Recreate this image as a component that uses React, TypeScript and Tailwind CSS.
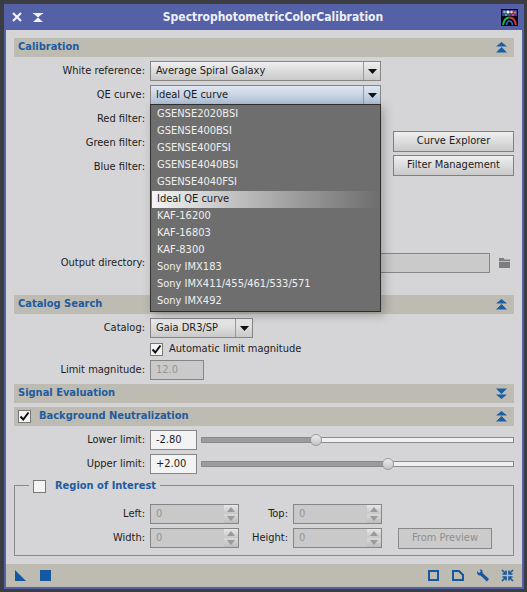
import type { ReactNode } from "react";

const qeCurves = [
  "GSENSE2020BSI",
  "GSENSE400BSI",
  "GSENSE400FSI",
  "GSENSE4040BSI",
  "GSENSE4040FSI",
  "Ideal QE curve",
  "KAF-16200",
  "KAF-16803",
  "KAF-8300",
  "Sony IMX183",
  "Sony IMX411/455/461/533/571",
  "Sony IMX492",
];

function Collapse({ down = false }: { down?: boolean }) {
  return (
    <svg width="11" height="11" viewBox="0 0 11 11" className={down ? "rotate-180" : ""}>
      <path d="M5.5 0 L11 4.5 H0 Z M5.5 5 L11 10.5 H0 Z" fill="#1a5ea3" />
    </svg>
  );
}

function SectionHeader({ title, collapsed = false, check = false }: { title: string; collapsed?: boolean; check?: boolean }) {
  return (
    <div className="flex items-center h-[19px] bg-[#bdbbb2] pl-[4px] pr-[7px] shrink-0">
      {check && (
        <div className="mr-[8px]">
          <CheckBox checked />
        </div>
      )}
      <span className="font-bold text-[#1d5c9f] text-[11px] flex-1">{title}</span>
      <Collapse down={collapsed} />
    </div>
  );
}

function CheckBox({ checked = false }: { checked?: boolean }) {
  return (
    <div className="w-[13px] h-[13px] border border-[#777] bg-[#f4f4f4] flex items-center justify-center shrink-0">
      {checked && (
        <svg width="11" height="11" viewBox="0 0 11 11">
          <path d="M1.5 5.5 L4.3 8.5 L9.5 1.5" fill="none" stroke="#111" strokeWidth="2" />
        </svg>
      )}
    </div>
  );
}

function Label({ children, w = "w-[131px]" }: { children?: ReactNode; w?: string }) {
  return <div className={`${w} text-right text-[#1c1c1c] mr-[5px] shrink-0`}>{children}</div>;
}

function Row({ label, children }: { label?: string; children: ReactNode }) {
  return (
    <div className="flex items-center h-[20px] mt-[4px] shrink-0">
      <Label>{label}</Label>
      {children}
    </div>
  );
}

function Combo({ value, w = "w-[231px]", open = false }: { value: string; w?: string; open?: boolean }) {
  return (
    <div
      className={`${w} h-[20px] border border-[#868686] flex items-center shrink-0 bg-gradient-to-b ${
        open ? "from-[#dfe6f1] to-[#b3c3da]" : "from-[#efefef] to-[#c9c9c9]"
      }`}
    >
      <span className="flex-1 pl-[5px] text-[#1c1c1c] whitespace-nowrap">{value}</span>
      <div className="w-[17px] h-[18px] border-l border-[#999] flex items-center justify-center shrink-0">
        <svg width="9" height="5" viewBox="0 0 9 5">
          <path d="M0 0 H9 L4.5 5 Z" fill="#111" />
        </svg>
      </div>
    </div>
  );
}

function Button({ children, disabled = false, w = "w-[121px]" }: { children: ReactNode; disabled?: boolean; w?: string }) {
  return (
    <div
      className={`${w} h-[21px] border flex items-center justify-center shrink-0 ${
        disabled
          ? "border-[#888] text-[#8f8f8f] bg-[#cbcbcb]"
          : "border-[#808080] text-[#1c1c1c] bg-gradient-to-b from-[#efefef] to-[#c9c9c9]"
      }`}
    >
      {children}
    </div>
  );
}

function Spin({ value }: { value: string }) {
  return (
    <div className="w-[89px] h-[20px] border border-[#868686] bg-[#c9c9c9] flex items-center shrink-0">
      <span className="flex-1 pl-[5px] text-[#959595]">{value}</span>
      <div className="w-[14px] h-[18px] flex flex-col shrink-0">
        <div className="flex-1 bg-gradient-to-b from-[#e6e6e6] to-[#c6c6c6] flex items-center justify-center">
          <svg width="8" height="5" viewBox="0 0 8 5">
            <path d="M4 0 L8 5 H0 Z" fill="#9a9a9a" />
          </svg>
        </div>
        <div className="flex-1 bg-gradient-to-b from-[#d9d9d9] to-[#bdbdbd] flex items-center justify-center">
          <svg width="8" height="5" viewBox="0 0 8 5">
            <path d="M0 0 H8 L4 5 Z" fill="#9a9a9a" />
          </svg>
        </div>
      </div>
    </div>
  );
}

function Slider({ pos }: { pos: number }) {
  return (
    <div className="relative flex-1 h-[6px] ml-[4px] border border-[#8a8a8a] bg-[#efefef]">
      <div className="h-full bg-[#9b9b9b]" style={{ width: pos }} />
      <div
        className="absolute top-[-4px] w-[12px] h-[12px] rounded-full border border-[#9a9a9a] bg-gradient-to-b from-[#ececec] to-[#c4c4c4]"
        style={{ left: pos - 6 }}
      />
    </div>
  );
}

function TextBox({ value, w, disabled = false }: { value?: string; w: string; disabled?: boolean }) {
  return (
    <div
      className={`${w} h-[20px] border border-[#868686] flex items-center pl-[5px] shrink-0 ${
        disabled ? "bg-[#cacaca] text-[#959595]" : "bg-[#f3f3f3] text-[#1c1c1c]"
      }`}
    >
      {value}
    </div>
  );
}

function AppLogo() {
  return (
    <svg width="17" height="17" viewBox="0 0 17 17">
      <rect width="17" height="17" fill="#07070c" />
      <rect x="1" y="1" width="15" height="6" fill="#4a3a90" />
      <circle cx="3.5" cy="3" r="1.3" fill="#40e0a0" />
      <circle cx="7" cy="3" r="1.6" fill="#ffffff" />
      <circle cx="10.5" cy="3" r="1.3" fill="#f8e850" />
      <circle cx="14" cy="3.5" r="1.3" fill="#f06060" />
      <circle cx="5" cy="6" r="1" fill="#40d060" />
      <circle cx="12" cy="6" r="1" fill="#e040c0" />
      <path d="M2 16 C3 10 6 8.5 8.5 8.5" fill="none" stroke="#20b050" strokeWidth="2" />
      <path d="M8.5 8.5 C11 8.5 14 10 15 16" fill="none" stroke="#e03030" strokeWidth="2" />
      <path d="M5.5 16 C6 13 7 12 8.5 12 C10 12 11 13 11.5 16" fill="none" stroke="#2070e0" strokeWidth="1.6" />
    </svg>
  );
}

export default function App() {
  return (
    <div className="w-[527px] h-[592px] bg-[#3b3d42] pt-[4px] pl-[4px] text-[11px] font-['DejaVu_Sans_Condensed','DejaVu_Sans',sans-serif] overflow-hidden">
      <div className="w-[520px] h-[585px] bg-[#5561a6] px-[2px] pb-[2px] flex flex-col">
        {/* Title bar */}
        <div className="h-[26px] flex items-center shrink-0 relative">
          <svg width="10" height="10" viewBox="0 0 10 10" className="ml-[6px]">
            <path d="M1 1 L9 9 M9 1 L1 9" stroke="#f2f2f6" strokeWidth="2.2" />
          </svg>
          <svg width="10" height="9" viewBox="0 0 10 9" className="ml-[11px]">
            <path d="M0 0 H10 V1 H0 Z M1 1 H9 L5 4.5 Z M5 4.5 L10 9 H0 Z" fill="#f2f2f6" />
          </svg>
          <span className="flex-1 text-center font-bold text-[#eef0f8] text-[12px] pl-[2px]">
            SpectrophotometricColorCalibration
          </span>
          <div className="mr-[4px]">
            <AppLogo />
          </div>
        </div>

        {/* Body */}
        <div className="flex-1 bg-[#d5d5d7] flex flex-col relative">
          <div className="px-[8px] pt-[8px] flex flex-col flex-1">
            <SectionHeader title="Calibration" />
            <Row label="White reference:">
              <Combo value="Average Spiral Galaxy" />
            </Row>
            <Row label="QE curve:">
              <Combo value="Ideal QE curve" open />
            </Row>
            <Row label="Red filter:">
              <Combo value="" />
            </Row>
            <Row label="Green filter:">
              <Combo value="" />
              <div className="ml-[12px] -mt-[4px]">
                <Button>Curve Explorer</Button>
              </div>
            </Row>
            <Row label="Blue filter:">
              <Combo value="" />
              <div className="ml-[12px] -mt-[3px]">
                <Button>Filter Management</Button>
              </div>
            </Row>
            <div className="h-[72px] shrink-0" />
            <Row label="Output directory:">
              <TextBox w="w-[340px]" disabled />
              <svg width="11" height="10" viewBox="0 0 11 10" className="ml-[9px]">
                <path d="M0 0 H4.5 L5.5 1.5 H11 V3 H0 Z M0 3.8 H11 V10 H0 Z" fill="#7d7d7d" />
              </svg>
            </Row>

            <div className="mt-[22px]">
              <SectionHeader title="Catalog Search" />
            </div>
            <Row label="Catalog:">
              <Combo value="Gaia DR3/SP" w="w-[103px]" />
            </Row>
            <div className="flex items-center h-[14px] mt-[4px] shrink-0">
              <Label />
              <CheckBox checked />
              <span className="ml-[6px] text-[#1c1c1c]">Automatic limit magnitude</span>
            </div>
            <Row label="Limit magnitude:">
              <TextBox value="12.0" w="w-[54px]" disabled />
            </Row>
            <div className="mt-[4px]">
              <SectionHeader title="Signal Evaluation" collapsed />
            </div>
            <div className="mt-[4px]">
              <SectionHeader title="Background Neutralization" check />
            </div>
            <Row label="Lower limit:">
              <TextBox value="-2.80" w="w-[47px]" />
              <Slider pos={114} />
            </Row>
            <Row label="Upper limit:">
              <TextBox value="+2.00" w="w-[47px]" />
              <Slider pos={186} />
            </Row>

            {/* Region of Interest */}
            <div className="relative mt-[11px] h-[71px] border border-[#8a8a8a] pt-[14px] shrink-0">
              <div className="absolute left-[14px] top-[-7px] flex items-center bg-[#d5d5d7] px-[4px] h-[14px]">
                <CheckBox />
                <span className="ml-[9px] font-bold text-[#1d5c9f] text-[11px]">Region of Interest</span>
              </div>
              <div className="flex items-center h-[20px] mt-[4px] -ml-[1px]">
                <Label>Left:</Label>
                <Spin value="0" />
                <Label w="w-[49px]">Top:</Label>
                <Spin value="0" />
              </div>
              <div className="flex items-center h-[20px] mt-[4px] -ml-[1px]">
                <Label>Width:</Label>
                <Spin value="0" />
                <Label w="w-[49px]">Height:</Label>
                <Spin value="0" />
                <div className="ml-[16px]">
                  <Button disabled w="w-[94px]">From Preview</Button>
                </div>
              </div>
            </div>
          </div>

          {/* Footer */}
          <div className="h-[23px] bg-[#bdbbb2] flex items-center pl-[9px] pr-[8px] shrink-0">
            <svg width="11" height="11" viewBox="0 0 11 11">
              <path d="M0 0 L11 11 H0 Z" fill="#14589f" />
            </svg>
            <div className="w-[11px] h-[11px] bg-[#14589f] ml-[14px]" />
            <div className="flex-1" />
            <svg width="11" height="11" viewBox="0 0 11 11">
              <rect x="1" y="1" width="9" height="9" fill="none" stroke="#14589f" strokeWidth="2" />
            </svg>
            <svg width="12" height="11" viewBox="0 0 12 11" className="ml-[13px]">
              <path d="M1 1 H7 L11 5 V10 H1 Z" fill="none" stroke="#14589f" strokeWidth="2" />
            </svg>
            <svg width="14" height="13" viewBox="0 0 14 13" className="ml-[12px]">
              <path d="M1 2 L3 4 L5 2.5 L3.5 0.5 C6 0 7 2 6.5 4 L13 10 L11 12.5 L4.5 6.5 C2.5 7 0.5 5 1 2 Z" fill="#14589f" />
            </svg>
            <svg width="13" height="13" viewBox="0 0 13 13" className="ml-[11px]">
              <path
                d="M1 1 L5 5 M5 1.5 V5 H1.5 M12 1 L8 5 M8 1.5 V5 H11.5 M1 12 L5 8 M5 11.5 V8 H1.5 M12 12 L8 8 M8 11.5 V8 H11.5"
                fill="none"
                stroke="#14589f"
                strokeWidth="1.6"
              />
            </svg>
          </div>

          {/* Open QE curve list */}
          <div className="absolute left-[144px] top-[74px] w-[231px] h-[208px] bg-[#6e6e6e] border border-[#2e2e2e] py-[1px] px-[1px] shadow-[3px_3px_10px_rgba(0,0,0,0.25)]">
            {qeCurves.map((name) =>
              name === "Ideal QE curve" ? (
                <div
                  key={name}
                  className="h-[17px] flex items-center pl-[5px] text-[#1c1c1c] bg-gradient-to-r from-[#f4f4f4] to-[#6e6e6e] whitespace-nowrap"
                >
                  {name}
                </div>
              ) : (
                <div key={name} className="h-[17px] flex items-center pl-[5px] text-[#f0f0f0] whitespace-nowrap">
                  {name}
                </div>
              ),
            )}
          </div>
        </div>
      </div>
    </div>
  );
}
